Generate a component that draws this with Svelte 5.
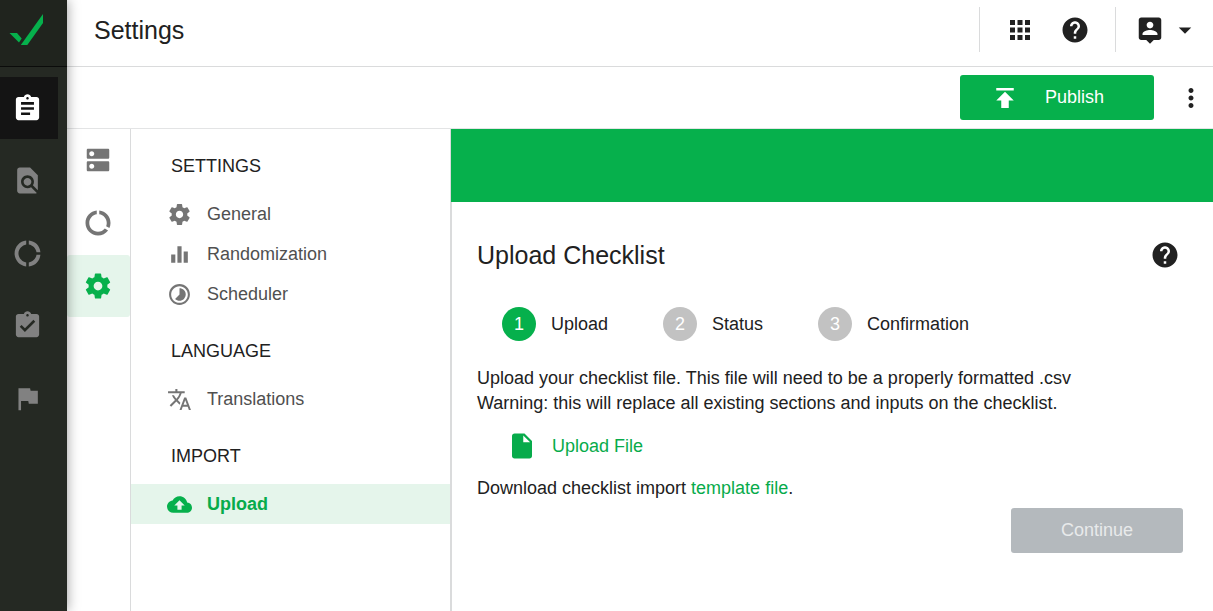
<script>
  const icons = {
    assignment: 'M19 3h-4.18C14.4 1.84 13.3 1 12 1c-1.3 0-2.4.84-2.82 2H5c-1.1 0-2 .9-2 2v14c0 1.1.9 2 2 2h14c1.1 0 2-.9 2-2V5c0-1.1-.9-2-2-2zm-7 0c.55 0 1 .45 1 1s-.45 1-1 1-1-.45-1-1 .45-1 1-1zm2 14H7v-2h7v2zm3-4H7v-2h10v2zm0-4H7V7h10v2z',
    find: 'M20 19.59V8l-6-6H6c-1.1 0-1.99.9-1.99 2L4 20c0 1.1.89 2 1.99 2H18c.45 0 .85-.15 1.19-.4l-4.43-4.43c-.8.52-1.74.83-2.76.83-2.76 0-5-2.24-5-5s2.24-5 5-5 5 2.24 5 5c0 1.02-.31 1.96-.83 2.75L20 19.59zM9 13c0 1.66 1.34 3 3 3s3-1.34 3-3-1.34-3-3-3-3 1.34-3 3z',
    donut: 'M11 5.08V2c-5 .5-9 4.81-9 10s4 9.5 9 10v-3.08c-3-.48-6-3.4-6-6.92s3-6.44 6-6.92zM18.97 11H22c-.47-5-4-8.53-9-9v3.08C16 5.51 18.54 8 18.97 11zM13 18.92V22c5-.47 8.53-4 9-9h-3.03c-.43 3-2.97 5.49-5.97 5.92z',
    done: 'M19 3h-4.18C14.4 1.84 13.3 1 12 1c-1.3 0-2.4.84-2.82 2H5c-1.1 0-2 .9-2 2v14c0 1.1.9 2 2 2h14c1.1 0 2-.9 2-2V5c0-1.1-.9-2-2-2zm-7 0c.55 0 1 .45 1 1s-.45 1-1 1-1-.45-1-1 .45-1 1-1zm-2 14l-4-4 1.41-1.41L10 14.17l6.59-6.59L18 9l-8 8z',
    flag: 'M14.4 6L14 4H5v17h2v-7h5.6l.4 2h7V6z',
    dns: 'M20 13H4c-.55 0-1 .45-1 1v6c0 .55.45 1 1 1h16c.55 0 1-.45 1-1v-6c0-.55-.45-1-1-1zM7 19c-1.1 0-2-.9-2-2s.9-2 2-2 2 .9 2 2-.9 2-2 2zM20 3H4c-.55 0-1 .45-1 1v6c0 .55.45 1 1 1h16c.55 0 1-.45 1-1V4c0-.55-.45-1-1-1zM7 9c-1.1 0-2-.9-2-2s.9-2 2-2 2 .9 2 2-.9 2-2 2z',
    usage: 'M13 2.05v3.03c3.39.49 6 3.39 6 6.92 0 .9-.18 1.75-.48 2.54l2.6 1.53c.56-1.24.88-2.62.88-4.07 0-5.18-3.95-9.45-9-9.95zM12 19c-3.87 0-7-3.13-7-7 0-3.53 2.61-6.43 6-6.92V2.05c-5.06.5-9 4.76-9 9.95 0 5.52 4.47 10 9.99 10 3.31 0 6.24-1.61 8.06-4.09l-2.6-1.53C16.17 17.98 14.21 19 12 19z',
    settings: 'M19.43 12.98c.04-.32.07-.64.07-.98s-.03-.66-.07-.98l2.11-1.65c.19-.15.24-.42.12-.64l-2-3.46c-.12-.22-.39-.3-.61-.22l-2.49 1c-.52-.4-1.08-.73-1.69-.98l-.38-2.65C14.46 2.18 14.25 2 14 2h-4c-.25 0-.46.18-.49.42l-.38 2.65c-.61.25-1.17.59-1.69.98l-2.49-1c-.23-.09-.49 0-.61.22l-2 3.46c-.13.22-.07.49.12.64l2.11 1.65c-.04.32-.07.65-.07.98s.03.66.07.98l-2.11 1.65c-.19.15-.24.42-.12.64l2 3.46c.12.22.39.3.61.22l2.49-1c.52.4 1.08.73 1.69.98l.38 2.65c.03.24.24.42.49.42h4c.25 0 .46-.18.49-.42l.38-2.65c.61-.25 1.17-.59 1.69-.98l2.49 1c.23.09.49 0 .61-.22l2-3.46c.12-.22.07-.49-.12-.64l-2.11-1.65zM12 15.5c-1.93 0-3.5-1.57-3.5-3.5s1.57-3.5 3.5-3.5 3.5 1.57 3.5 3.5-1.57 3.5-3.5 3.5z',
    equalizer: 'M10 20h4V4h-4v16zm-6 0h4v-8H4v8zM16 9v11h4V9h-4z',
    timelapse: 'M16.24 7.76C15.07 6.59 13.54 6 12 6v6l-4.24 4.24c2.34 2.34 6.14 2.34 8.49 0 2.34-2.34 2.34-6.14-.01-8.48zM12 2C6.48 2 2 6.48 2 12s4.48 10 10 10 10-4.48 10-10S17.52 2 12 2zm0 18c-4.42 0-8-3.58-8-8s3.58-8 8-8 8 3.58 8 8-3.58 8-8 8z',
    translate: 'M12.87 15.07l-2.54-2.51.03-.03c1.74-1.94 2.98-4.17 3.71-6.53H17V4h-7V2H8v2H1v1.99h11.17C11.5 7.92 10.44 9.75 9 11.35 8.07 10.32 7.3 9.19 6.69 8h-2c.73 1.63 1.73 3.17 2.98 4.56l-5.09 5.02L4 19l5-5 3.11 3.11.76-2.04zM18.5 10h-2L12 22h2l1.12-3h4.75L21 22h2l-4.5-12zm-2.62 7l1.62-4.33L19.12 17h-3.24z',
    cloud: 'M19.35 10.04C18.67 6.59 15.64 4 12 4 9.11 4 6.6 5.64 5.35 8.04 2.34 8.36 0 10.91 0 14c0 3.31 2.69 6 6 6h13c2.76 0 5-2.24 5-5 0-2.64-2.05-4.78-4.65-4.96zM14 13v4h-4v-4H7l5-5 5 5h-3z',
    apps: 'M4 8h4V4H4v4zm6 12h4v-4h-4v4zm-6 0h4v-4H4v4zm0-6h4v-4H4v4zm6 0h4v-4h-4v4zm6-10v4h4V4h-4zm-6 4h4V4h-4v4zm6 6h4v-4h-4v4zm0 6h4v-4h-4v4z',
    help: 'M12 2C6.48 2 2 6.48 2 12s4.48 10 10 10 10-4.48 10-10S17.52 2 12 2zm1 17h-2v-2h2v2zm2.07-7.75l-.9.92C13.45 12.9 13 13.5 13 15h-2v-.5c0-1.1.45-2.1 1.17-2.83l1.24-1.26c.37-.36.59-.86.59-1.41 0-1.1-.9-2-2-2s-2 .9-2 2H8c0-2.21 1.79-4 4-4s4 1.79 4 4c0 .88-.36 1.68-.93 2.25z',
    person: 'M19 2H5c-1.11 0-2 .9-2 2v14c0 1.1.89 2 2 2h4l3 3 3-3h4c1.1 0 2-.9 2-2V4c0-1.1-.9-2-2-2zm-7 3.3c1.49 0 2.7 1.21 2.7 2.7 0 1.49-1.21 2.7-2.7 2.7-1.49 0-2.7-1.21-2.7-2.7 0-1.49 1.21-2.7 2.7-2.7zM18 16H6v-.9c0-2 4-3.1 6-3.1s6 1.1 6 3.1v.9z',
    drop: 'M7 10l5 5 5-5z',
    publish: 'M5 4v2h14V4H5zm0 10h4v6h6v-6h4l-7-7-7 7z',
    more: 'M12 8c1.1 0 2-.9 2-2s-.9-2-2-2-2 .9-2 2 .9 2 2 2zm0 2c-1.1 0-2 .9-2 2s.9 2 2 2 2-.9 2-2-.9-2-2-2zm0 6c-1.1 0-2 .9-2 2s.9 2 2 2 2-.9 2-2-.9-2-2-2z',
    file: 'M6 2c-1.1 0-1.99.9-1.99 2L4 20c0 1.1.89 2 1.99 2H18c1.1 0 2-.9 2-2V8l-6-6H6zm7 7V3.5L18.5 9H13z'
  };

  const mainNav = [
    { icon: 'assignment', label: 'Checklists' },
    { icon: 'find', label: 'Review' },
    { icon: 'donut', label: 'Analytics' },
    { icon: 'done', label: 'Tasks' },
    { icon: 'flag', label: 'Flags' }
  ];
  const subNav = [
    { icon: 'dns', label: 'Sections' },
    { icon: 'usage', label: 'Usage' },
    { icon: 'settings', label: 'Settings' }
  ];
  const groups = [
    {
      title: 'SETTINGS',
      items: [
        { icon: 'settings', label: 'General' },
        { icon: 'equalizer', label: 'Randomization' },
        { icon: 'timelapse', label: 'Scheduler' }
      ]
    },
    { title: 'LANGUAGE', items: [{ icon: 'translate', label: 'Translations' }] },
    { title: 'IMPORT', items: [{ icon: 'cloud', label: 'Upload' }] }
  ];
  const steps = ['Upload', 'Status', 'Confirmation'];

  let mainActive = $state('Checklists');
  let subActive = $state('Settings');
  let pageActive = $state('Upload');
</script>

{#snippet icon(name, size)}
  <svg class={size} viewBox="0 0 24 24" aria-hidden="true"><path d={icons[name]} /></svg>
{/snippet}

<div class="app">
  <nav class="sidebar" aria-label="Main">
    <a class="logo" href="#home" aria-label="Home">
      <svg viewBox="0 0 34 32" aria-hidden="true">
        <path d="M-.5 19h7.500l4.700 5.500-2.700 4z" />
        <path d="M33 0v9L17.300 31H10.800z" />
      </svg>
    </a>
    <div class="main-items">
      {#each mainNav as item}
        <button class:active={mainActive === item.label} aria-label={item.label} onclick={() => (mainActive = item.label)}>
          {@render icon(item.icon, 'large')}
        </button>
      {/each}
    </div>
  </nav>

  <div class="page">
    <header class="topbar">
      <h1>Settings</h1>
      <div class="tools">
        <button aria-label="Apps">{@render icon('apps', 'large')}</button>
        <button aria-label="Help">{@render icon('help', 'large')}</button>
      </div>
      <button class="account" aria-label="Account">
        {@render icon('person', 'large')}
        {@render icon('drop', 'large')}
      </button>
    </header>

    <div class="actions">
      <button class="publish">{@render icon('publish', 'large')}<span>Publish</span></button>
      <button class="more" aria-label="More">{@render icon('more', 'large')}</button>
    </div>

    <div class="body">
      <nav class="rail" aria-label="Section">
        {#each subNav as item}
          <button class:active={subActive === item.label} aria-label={item.label} onclick={() => (subActive = item.label)}>
            {@render icon(item.icon, 'large')}
          </button>
        {/each}
      </nav>

      <nav class="menu" aria-label="Settings pages">
        {#each groups as group}
          <h2>{group.title}</h2>
          {#each group.items as item}
            <a
              href={'#' + item.label.toLowerCase()}
              class:active={pageActive === item.label}
              onclick={() => (pageActive = item.label)}
            >
              {@render icon(item.icon, 'small')}
              <span>{item.label}</span>
            </a>
          {/each}
        {/each}
      </nav>

      <main>
        <div class="banner"></div>
        <section>
          <div class="title">
            <h2>Upload Checklist</h2>
            <button aria-label="Help">{@render icon('help', 'large')}</button>
          </div>
          <ol>
            {#each steps as step, i}
              <li class:current={i === 0}><span class="number">{i + 1}</span><span>{step}</span></li>
            {/each}
          </ol>
          <p>
            Upload your checklist file. This file will need to be a properly formatted .csv<br />
            Warning: this will replace all existing sections and inputs on the checklist.
          </p>
          <button class="upload">{@render icon('file', 'large')}<span>Upload File</span></button>
          <p>Download checklist import <a href="#template">template file</a>.</p>
          <div class="footer"><button class="continue" disabled>Continue</button></div>
        </section>
      </main>
    </div>
  </div>
</div>

<style>
  :global(body) {
    margin: 0;
  }
  .app {
    display: flex;
    min-height: 100vh;
    background: #fff;
    color: #212121;
    font: 18px/25px "Liberation Sans", Arial, sans-serif;
  }
  button {
    display: flex;
    align-items: center;
    justify-content: center;
    border: 0;
    padding: 0;
    background: none;
    color: inherit;
    font: inherit;
    cursor: pointer;
  }
  a {
    color: #07ab4b;
    text-decoration: none;
  }
  h1,
  h2,
  p,
  ol {
    margin: 0;
    padding: 0;
    font-weight: 400;
  }
  svg {
    display: block;
    flex: none;
    overflow: visible;
    fill: currentColor;
  }
  .large {
    width: 30px;
    height: 30px;
  }
  .small {
    width: 25px;
    height: 25px;
  }

  .sidebar {
    z-index: 1;
    flex: none;
    width: 67px;
    background: #252923;
    box-shadow: 0 0 12px rgba(0, 0, 0, 0.4);
  }
  .logo {
    display: flex;
    align-items: center;
    box-sizing: border-box;
    height: 67px;
    padding: 0 0 6px 10px;
    border-bottom: 1px solid #0b0c0b;
    background: #20241e;
    color: #06b04c;
  }
  .logo svg {
    width: 34px;
    height: 32px;
  }
  .main-items {
    display: flex;
    flex-direction: column;
    justify-content: space-between;
    min-height: 352px;
    padding-top: 10px;
  }
  .main-items button {
    width: 58px;
    height: 62px;
    padding-right: 4px;
    color: #818181;
  }
  .main-items .large {
    width: 31px;
    height: 31px;
  }
  .main-items .active {
    background: #141414;
    color: #fff;
  }

  .page {
    display: flex;
    flex: 1;
    flex-direction: column;
    min-width: 0;
  }
  .topbar {
    display: flex;
    align-items: center;
    box-sizing: border-box;
    height: 67px;
    padding: 0 13px 7px 27px;
    border-bottom: 1px solid #dadbdc;
  }
  h1,
  .title h2 {
    flex: 1;
    font-size: 25px;
    line-height: 30px;
  }
  .tools {
    display: flex;
    align-items: center;
    gap: 25px;
    height: 45px;
    padding: 0 25px;
    border: solid #dadbdc;
    border-width: 0 1px;
  }
  .account {
    gap: 5px;
    margin-left: 19px;
  }

  .actions {
    display: flex;
    align-items: center;
    justify-content: flex-end;
    gap: 22px;
    box-sizing: border-box;
    height: 62px;
    padding-right: 7px;
    border-bottom: 1px solid #e3e4e5;
  }
  .publish {
    gap: 25px;
    box-sizing: border-box;
    width: 194px;
    height: 45px;
    padding-right: 20px;
    border-radius: 3px;
    background: #06b04c;
    color: #fff;
  }

  .body {
    display: flex;
    flex: 1;
  }
  .rail {
    display: flex;
    flex: none;
    flex-direction: column;
    gap: 1px;
    width: 63px;
    border-right: 1px solid #dadbdc;
    color: #757575;
  }
  .rail button {
    height: 62px;
    padding-right: 1px;
  }
  .rail .active {
    border-radius: 3px;
    background: #e5f5eb;
    color: #06b04c;
  }
  .menu {
    flex: none;
    width: 319px;
    border-right: 1px solid #dadbdc;
  }
  .menu h2 {
    padding: 9px 0 0 40px;
    font-size: 18px;
    line-height: 56px;
  }
  .menu a {
    display: flex;
    align-items: center;
    gap: 15px;
    height: 40px;
    padding-left: 36px;
    color: #505050;
  }
  .menu svg {
    color: #757575;
  }
  .menu .active {
    background: #e5f5eb;
    color: #07ab4b;
    font-weight: 700;
  }
  .menu .active svg {
    color: #06b04c;
  }

  main {
    display: flex;
    flex: 1;
    flex-direction: column;
    min-width: 0;
  }
  .banner {
    height: 73px;
    background: #06b04c;
  }
  section {
    flex: 1;
    padding: 38px 30px 30px 25px;
    border-left: 1px solid #dadbdc;
  }
  .title {
    display: flex;
    align-items: center;
    padding-right: 3px;
  }
  ol {
    display: flex;
    gap: 55px;
    padding: 37px 25px 25px;
    list-style: none;
  }
  li {
    display: flex;
    align-items: center;
    gap: 15px;
  }
  .number {
    width: 34px;
    border-radius: 50%;
    background: #c2c2c2;
    color: #fff;
    line-height: 34px;
    text-align: center;
  }
  .current .number {
    background: #06b04c;
  }
  .upload {
    gap: 15px;
    margin: 15px 30px;
    color: #07ab4b;
  }
  .footer {
    display: flex;
    justify-content: flex-end;
    padding-top: 7px;
  }
  .continue {
    width: 172px;
    height: 45px;
    border-radius: 3px;
    background: #b4b9bd;
    color: #e8eaeb;
    cursor: default;
  }
</style>
